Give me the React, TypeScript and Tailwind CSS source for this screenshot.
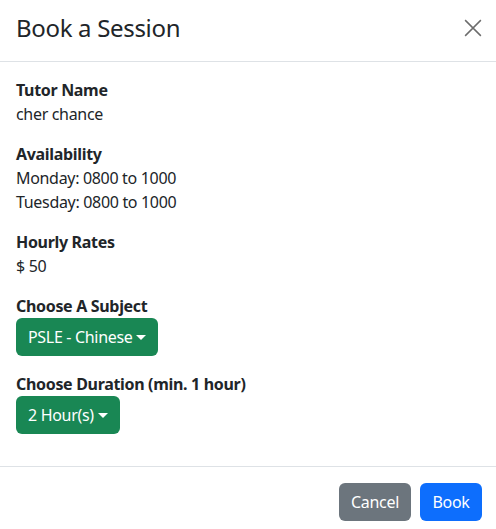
function Caret() {
  return (
    <span className="ml-[4px] inline-block h-0 w-0 border-x-[5px] border-t-[5px] border-x-transparent border-t-white align-[3px]" />
  );
}

function Field({ label, children }: { label: string; children: React.ReactNode }) {
  return (
    <div className="mb-4">
      <div className="font-bold">{label}</div>
      {children}
    </div>
  );
}

export default function App() {
  return (
    <div
      className="min-h-screen w-[496px] bg-white text-[16px] leading-6 tracking-[-0.02em] text-[#212529]"
      style={{ fontFamily: '"Noto Sans", "Open Sans", sans-serif' }}
    >
      <div className="flex h-[62px] items-start justify-between border-b border-[#dee2e6] px-4 pt-[12px]">
        <h4 className="text-[24px] leading-[32px] font-normal">Book a Session</h4>
        <button type="button" className="mt-[7px] mr-[-2px] text-[#6c6c6c]" aria-label="Close">
          <svg width="18" height="18" viewBox="0 0 16 16" fill="none" stroke="currentColor" strokeWidth="1.3" className="block">
            <path d="M1 1l14 14M15 1L1 15" />
          </svg>
        </button>
      </div>

      <div className="p-4">
        <Field label="Tutor Name">
          <div>cher chance</div>
        </Field>
        <Field label="Availability">
          <div>Monday: 0800 to 1000</div>
          <div>Tuesday: 0800 to 1000</div>
        </Field>
        <Field label="Hourly Rates">
          <div>$ 50</div>
        </Field>
        <Field label="Choose A Subject">
          <button type="button" className="h-[38px] rounded-md bg-[#198754] px-3 text-white">
            PSLE - Chinese
            <Caret />
          </button>
        </Field>
        <Field label="Choose Duration (min. 1 hour)">
          <button type="button" className="h-[38px] rounded-md bg-[#198754] px-3 text-white">
            2 Hour(s)
            <Caret />
          </button>
        </Field>
      </div>

      <div className="flex justify-end gap-[9px] border-t border-[#dee2e6] pt-4 pr-[14px] pb-4">
        <button type="button" className="h-[38px] w-[72px] rounded-md bg-[#6c757d] text-white">
          Cancel
        </button>
        <button type="button" className="h-[38px] w-[62px] rounded-md bg-[#0d6efd] text-white">
          Book
        </button>
      </div>
    </div>
  );
}
